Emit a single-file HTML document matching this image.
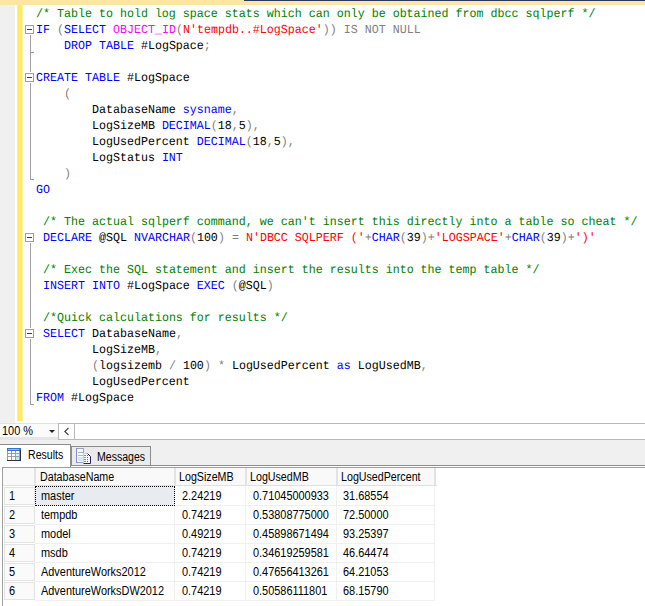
<!DOCTYPE html>
<html><head><meta charset="utf-8">
<style>
*{margin:0;padding:0;box-sizing:border-box}
html,body{width:645px;height:606px;overflow:hidden;background:#fff;position:relative}
.a{position:absolute}
#top{left:0;top:0;width:645px;height:5px;background:#fde5a2}
#topd{left:244px;top:0;width:401px;height:1px;background:#2b3a5c}
#gut{left:0;top:5px;width:15px;height:418px;background:#f0f0f0}
#yel{left:17px;top:5px;width:6px;height:416px;background:#ffeb60;border-left:1px solid #ffef8c;border-right:1px solid #fff3a8}
.code{position:absolute;left:36px;top:2px;font-family:"Liberation Mono",monospace;font-size:12.2px;line-height:16px;white-space:pre;color:#000;text-rendering:geometricPrecision;transform:scaleX(0.9561407318956802);transform-origin:0 0;width:700px}
.ln{position:absolute;left:0;height:16px}
.k{color:#0000ff}.c{color:#008000}.s{color:#ff0000}.f{color:#ff00ff}.g{color:#808080}
.fb{position:absolute;left:25px;width:9px;height:9px;border:1px solid #a0a0a0;background:#fff}
.fb:after{content:"";position:absolute;left:1px;top:3px;width:5px;height:1px;background:#404040}
.vl{position:absolute;left:30px;width:1px;background:#a0a0a0}
.tk{position:absolute;left:30px;width:4px;height:1px;background:#a0a0a0}
.ui{font-family:"Liberation Sans",sans-serif;font-size:11px;color:#000;white-space:pre}
.t{font-family:"Liberation Sans",sans-serif;font-size:12px;line-height:14px;white-space:pre;color:#000;transform:scaleX(0.91);transform-origin:0 0}.tb{transform:scaleX(0.88)}.th{transform:scaleX(0.89)}
</style></head><body>
<div class="a" id="top"></div>
<div class="a" id="topd"></div>
<div class="a" id="gut"></div>
<div class="a" id="yel"></div>

<!-- folding -->
<div class="fb" style="top:25px"></div>
<div class="vl" style="top:35px;height:37px"></div>
<div class="tk" style="top:52px"></div>
<div class="fb" style="top:73px"></div>
<div class="vl" style="top:83px;height:97px"></div>
<div class="tk" style="top:179px"></div>
<div class="fb" style="top:233px"></div>
<div class="vl" style="top:243px;height:85px"></div>
<div class="fb" style="top:329px"></div>
<div class="vl" style="top:339px;height:66px"></div>
<div class="tk" style="top:404px"></div>

<div class="code" id="code">
<div class="ln" style="top:4px"><span class="c">/* Table to hold log space stats which can only be obtained from dbcc sqlperf */</span></div>
<div class="ln" style="top:20px"><span class="k">IF</span> <span class="g">(</span><span class="k">SELECT</span> <span class="f">OBJECT_ID</span><span class="g">(</span><span class="s">N'tempdb..#LogSpace'</span><span class="g">))</span> <span class="g">IS NOT NULL</span></div>
<div class="ln" style="top:36px">    <span class="k">DROP TABLE</span> #LogSpace<span class="g">;</span></div>
<div class="ln" style="top:68px"><span class="k">CREATE TABLE</span> #LogSpace</div>
<div class="ln" style="top:84px">    <span class="g">(</span></div>
<div class="ln" style="top:100px">        DatabaseName <span class="k">sysname</span><span class="g">,</span></div>
<div class="ln" style="top:116px">        LogSizeMB <span class="k">DECIMAL</span><span class="g">(</span>18<span class="g">,</span>5<span class="g">),</span></div>
<div class="ln" style="top:132px">        LogUsedPercent <span class="k">DECIMAL</span><span class="g">(</span>18<span class="g">,</span>5<span class="g">),</span></div>
<div class="ln" style="top:148px">        LogStatus <span class="k">INT</span></div>
<div class="ln" style="top:164px">    <span class="g">)</span></div>
<div class="ln" style="top:180px"><span class="k">GO</span></div>
<div class="ln" style="top:212px"> <span class="c">/* The actual sqlperf command, we can't insert this directly into a table so cheat */</span></div>
<div class="ln" style="top:228px"> <span class="k">DECLARE</span> @SQL <span class="k">NVARCHAR</span><span class="g">(</span>100<span class="g">)</span> <span class="g">=</span> <span class="s">N'DBCC SQLPERF ('</span><span class="g">+</span><span class="k">CHAR</span><span class="g">(</span>39<span class="g">)+</span><span class="s">'LOGSPACE'</span><span class="g">+</span><span class="k">CHAR</span><span class="g">(</span>39<span class="g">)+</span><span class="s">')'</span></div>
<div class="ln" style="top:260px"> <span class="c">/* Exec the SQL statement and insert the results into the temp table */</span></div>
<div class="ln" style="top:276px"> <span class="k">INSERT INTO</span> #LogSpace <span class="k">EXEC</span> <span class="g">(</span>@SQL<span class="g">)</span></div>
<div class="ln" style="top:308px"> <span class="c">/*Quick calculations for results */</span></div>
<div class="ln" style="top:324px"> <span class="k">SELECT</span> DatabaseName<span class="g">,</span></div>
<div class="ln" style="top:340px">        LogSizeMB<span class="g">,</span></div>
<div class="ln" style="top:356px">        <span class="g">(</span>logsizemb <span class="g">/</span> 100<span class="g">)</span> <span class="g">*</span> LogUsedPercent <span class="k">as</span> LogUsedMB<span class="g">,</span></div>
<div class="ln" style="top:372px">        LogUsedPercent</div>
<div class="ln" style="top:388px"><span class="k">FROM</span> #LogSpace</div>
</div>


<div class="a" style="left:0px;top:421px;width:15px;height:2px;background:#f0f0f0;"></div>
<div class="a" style="left:0px;top:423px;width:58px;height:1px;background:#e2e2e2;"></div>
<div class="a" style="left:58px;top:423px;width:587px;height:1px;background:#b9b9b9;"></div>
<div class="a" style="left:0px;top:424px;width:58px;height:13px;background:#fbfbfb;"></div>
<div class="a" style="left:0px;top:437px;width:58px;height:3px;background:#e6e6e6;"></div>
<div class="a t" style="left:2px;top:424px;">100 %</div>
<div class="a" style="left:49px;top:430px;width:0;height:0;border-left:3px solid transparent;border-right:3px solid transparent;border-top:3px solid #1e2538"></div>
<div class="a" style="left:58px;top:423px;width:17px;height:17px;background:#fff;border:1px solid #b9b9b9"></div>
<div class="a" style="left:75px;top:439px;width:570px;height:1px;background:#b9b9b9;"></div>
<svg class="a" style="left:63px;top:427px" width="8" height="9"><path d="M5.5 1 L1.8 4.5 L5.5 8" fill="none" stroke="#404040" stroke-width="1.1"/></svg>
<div class="a" style="left:0px;top:440px;width:645px;height:26px;background:#f0f0f0;"></div>
<div class="a" style="left:0px;top:444px;width:71px;height:23px;background:#fff;border-top:1px solid #8c8c8c;border-right:1px solid #8c8c8c"></div>
<div class="a" style="left:71px;top:446px;width:80px;height:20px;background:#ebebeb;border:1px solid #8c8c8c"></div>
<div class="a" style="left:151px;top:465px;width:494px;height:1px;background:#8c8c8c;"></div>
<div class="a t tb" style="left:28px;top:448px;">Results</div>
<div class="a t tb" style="left:97px;top:450px;">Messages</div>
<svg class="a" style="left:7px;top:448px" width="14" height="13">
<rect x="0" y="0" width="14" height="13" fill="#9c9c9c"/>
<rect x="0" y="0" width="14" height="3" fill="#3b74d4"/>
<rect x="1" y="1" width="11" height="1" fill="#8cb6f0"/>
<rect x="1" y="3" width="3" height="2" fill="#fff"/><rect x="5" y="3" width="3" height="2" fill="#fff"/><rect x="9" y="3" width="3" height="2" fill="#fff"/>
<rect x="1" y="6" width="3" height="2" fill="#fff"/><rect x="5" y="6" width="3" height="2" fill="#fff"/><rect x="9" y="6" width="3" height="2" fill="#dff2ff"/>
<rect x="1" y="9" width="3" height="3" fill="#fff"/><rect x="5" y="9" width="3" height="3" fill="#f0f8ff"/><rect x="9" y="9" width="3" height="3" fill="#bfe6ff"/>
<rect x="13" y="2" width="1" height="11" fill="#303040"/><rect x="0" y="12" width="14" height="1" fill="#303040"/>
</svg>
<svg class="a" style="left:76px;top:448px" width="15" height="16">
<rect x="0.5" y="0.5" width="7" height="14" fill="#f4f9ff" stroke="#a0a0c0" stroke-width="1"/>
<rect x="0" y="0" width="1" height="15" fill="#8a8ad0"/>
<rect x="2" y="4" width="5" height="1" fill="#a8b0b8"/><rect x="2" y="7" width="5" height="1" fill="#b0b8c0"/>
<rect x="2" y="9" width="5" height="4" fill="#cfeaff"/>
<path d="M7 5 H12 L14 7 V15 H7 Z" fill="#fdfdff"/>
<path d="M7.5 15.5 V5.5 H11.5" fill="none" stroke="#b8d8e8" stroke-width="1"/>
<path d="M11.5 5.5 L14.5 8.5 V15.5 H7.5" fill="none" stroke="#22226a" stroke-width="1"/>
<rect x="8" y="7" width="2" height="1" fill="#ff6a4a"/><rect x="11" y="7" width="1" height="1" fill="#3a8a3a"/>
<rect x="8" y="9" width="2" height="1" fill="#ff7a3a"/><rect x="11" y="9" width="1" height="1" fill="#3a9a3a"/>
<rect x="8" y="11" width="2" height="1" fill="#ff5a4a"/><rect x="11" y="11" width="1" height="1" fill="#3a9a3a"/>
<rect x="8" y="13" width="2" height="1" fill="#ff6a3a"/><rect x="11" y="13" width="1" height="1" fill="#2a7a2a"/>
</svg>
<div class="a" style="left:2px;top:467px;width:643px;height:139px;background:#fff;border-top:1px solid #a0a0a0;border-left:1px solid #a0a0a0"></div>
<div class="a" style="left:3px;top:468px;width:433px;height:18px;background:#f9f9f9;"></div>
<div class="a" style="left:34px;top:468px;width:2px;height:18px;background:#e3e3e3;"></div>
<div class="a" style="left:174px;top:468px;width:2px;height:18px;background:#e3e3e3;"></div>
<div class="a" style="left:245px;top:468px;width:2px;height:18px;background:#e3e3e3;"></div>
<div class="a" style="left:336px;top:468px;width:2px;height:18px;background:#e3e3e3;"></div>
<div class="a" style="left:434px;top:468px;width:2px;height:18px;background:#e3e3e3;"></div>
<div class="a" style="left:3px;top:485px;width:434px;height:1px;background:#e0e0e0;"></div>
<div class="a" style="left:4px;top:487px;width:31px;height:18px;background:#fafafa;border:1px solid #e3e3e3"></div>
<div class="a" style="left:4px;top:506px;width:31px;height:18px;background:#fafafa;border:1px solid #e3e3e3"></div>
<div class="a" style="left:4px;top:525px;width:31px;height:18px;background:#fafafa;border:1px solid #e3e3e3"></div>
<div class="a" style="left:4px;top:544px;width:31px;height:18px;background:#fafafa;border:1px solid #e3e3e3"></div>
<div class="a" style="left:4px;top:563px;width:31px;height:18px;background:#fafafa;border:1px solid #e3e3e3"></div>
<div class="a" style="left:4px;top:582px;width:31px;height:18px;background:#fafafa;border:1px solid #e3e3e3"></div>
<div class="a" style="left:35px;top:505px;width:400px;height:1px;background:#f0f0f0;"></div>
<div class="a" style="left:35px;top:524px;width:400px;height:1px;background:#f0f0f0;"></div>
<div class="a" style="left:35px;top:543px;width:400px;height:1px;background:#f0f0f0;"></div>
<div class="a" style="left:35px;top:562px;width:400px;height:1px;background:#f0f0f0;"></div>
<div class="a" style="left:35px;top:581px;width:400px;height:1px;background:#f0f0f0;"></div>
<div class="a" style="left:35px;top:600px;width:400px;height:1px;background:#f0f0f0;"></div>
<div class="a" style="left:174px;top:486px;width:1px;height:115px;background:#f0f0f0;"></div>
<div class="a" style="left:245px;top:486px;width:1px;height:115px;background:#f0f0f0;"></div>
<div class="a" style="left:336px;top:486px;width:1px;height:115px;background:#f0f0f0;"></div>
<div class="a" style="left:434px;top:486px;width:1px;height:115px;background:#f0f0f0;"></div>
<div class="a" style="left:35px;top:486px;width:140px;height:20px;background:#e8ecf1;border:1px dotted #000"></div>
<div class="a t th" style="left:40px;top:470px;">DatabaseName</div>
<div class="a t th" style="left:179px;top:470px;">LogSizeMB</div>
<div class="a t th" style="left:250px;top:470px;">LogUsedMB</div>
<div class="a t th" style="left:341px;top:470px;">LogUsedPercent</div>
<div class="a t" style="left:9px;top:489px;">1</div>
<div class="a t" style="left:41px;top:489px;">master</div>
<div class="a t" style="left:182px;top:489px;">2.24219</div>
<div class="a t" style="left:253px;top:489px;">0.71045000933</div>
<div class="a t" style="left:343px;top:489px;">31.68554</div>
<div class="a t" style="left:9px;top:508px;">2</div>
<div class="a t" style="left:41px;top:508px;">tempdb</div>
<div class="a t" style="left:182px;top:508px;">0.74219</div>
<div class="a t" style="left:253px;top:508px;">0.53808775000</div>
<div class="a t" style="left:343px;top:508px;">72.50000</div>
<div class="a t" style="left:9px;top:527px;">3</div>
<div class="a t" style="left:41px;top:527px;">model</div>
<div class="a t" style="left:182px;top:527px;">0.49219</div>
<div class="a t" style="left:253px;top:527px;">0.45898671494</div>
<div class="a t" style="left:343px;top:527px;">93.25397</div>
<div class="a t" style="left:9px;top:546px;">4</div>
<div class="a t" style="left:41px;top:546px;">msdb</div>
<div class="a t" style="left:182px;top:546px;">0.74219</div>
<div class="a t" style="left:253px;top:546px;">0.34619259581</div>
<div class="a t" style="left:343px;top:546px;">46.64474</div>
<div class="a t" style="left:9px;top:565px;">5</div>
<div class="a t" style="left:41px;top:565px;">AdventureWorks2012</div>
<div class="a t" style="left:182px;top:565px;">0.74219</div>
<div class="a t" style="left:253px;top:565px;">0.47656413261</div>
<div class="a t" style="left:343px;top:565px;">64.21053</div>
<div class="a t" style="left:9px;top:584px;">6</div>
<div class="a t" style="left:41px;top:584px;">AdventureWorksDW2012</div>
<div class="a t" style="left:182px;top:584px;">0.74219</div>
<div class="a t" style="left:253px;top:584px;">0.50586111801</div>
<div class="a t" style="left:343px;top:584px;">68.15790</div>
</body></html>
